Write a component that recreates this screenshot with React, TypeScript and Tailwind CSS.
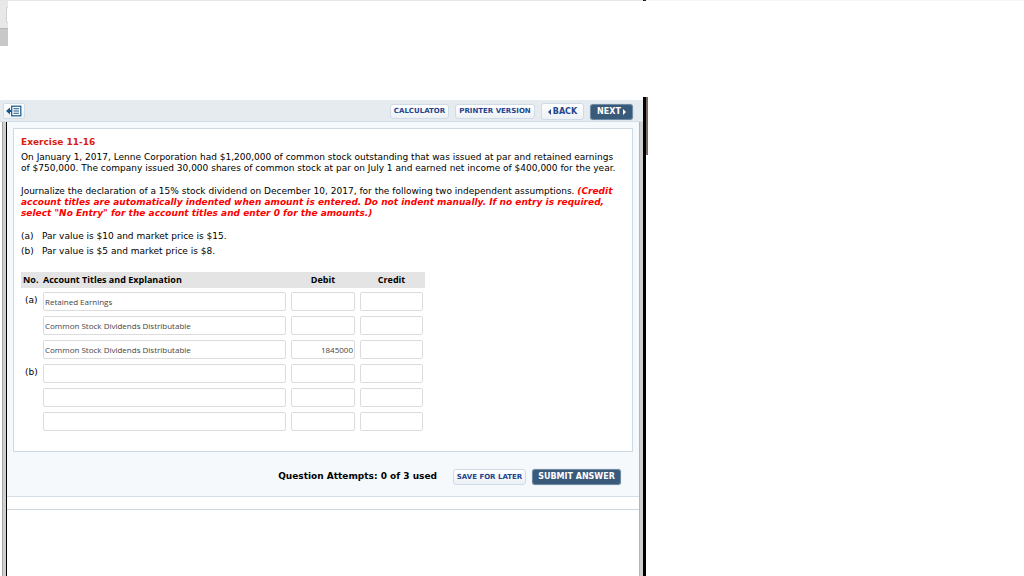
import { useState } from 'react';
import type { ReactNode } from 'react';
import clsx from 'clsx';

interface EntryRow {
  no?: string;
  account: string;
  debit: string;
  credit: string;
}

const INITIAL_ROWS: EntryRow[] = [
  { no: '(a)', account: 'Retained Earnings', debit: '', credit: '' },
  { account: 'Common Stock Dividends Distributable', debit: '', credit: '' },
  { account: 'Common Stock Dividends Distributable', debit: '1845000', credit: '' },
  { no: '(b)', account: '', debit: '', credit: '' },
  { account: '', debit: '', credit: '' },
  { account: '', debit: '', credit: '' },
];

const FIELD =
  "block h-[19px] w-full rounded-xs border border-[#dcdcdc] bg-white px-px font-['Open_Sans',sans-serif] text-[8px] text-[#444] outline-none focus:border-[#8fb1cc]";

function LightButton({
  children,
  className,
}: {
  children: ReactNode;
  className?: string;
}) {
  return (
    <button
      type="button"
      className={clsx(
        'flex items-center justify-center whitespace-nowrap rounded-[3px] border border-[#cfdbe6] bg-linear-to-b from-white to-[#edf1f5] font-bold text-[#24458f]',
        className
      )}
    >
      {children}
    </button>
  );
}

function DarkButton({
  children,
  className,
}: {
  children: ReactNode;
  className?: string;
}) {
  return (
    <button
      type="button"
      className={clsx(
        'flex items-center justify-center whitespace-nowrap rounded-[3px] border border-[#6f8ba3] bg-[#3a5a7a] font-bold text-white shadow-[0_0_1px_#8aa5bb]',
        className
      )}
    >
      {children}
    </button>
  );
}

function CollapseIcon() {
  return (
    <svg width="16" height="12" viewBox="0 0 16 12" aria-hidden="true">
      <path d="M0 6 L4 2.6 V5 H6 V7 H4 V9.4 Z" fill="#14558a" />
      <rect x="5.7" y="1.2" width="9.1" height="9.6" fill="#fff" stroke="#14558a" strokeWidth="1.2" />
      <path d="M7.5 3.7 H13 M7.5 6 H13 M7.5 8.3 H13" stroke="#14558a" strokeWidth="1.1" />
    </svg>
  );
}

function Toolbar() {
  return (
    <div className="flex h-[22px] items-center border-b border-[#d3dee8] bg-[#e6ebf0] pr-2.5 pl-[3px]">
      <button
        type="button"
        aria-label="Toggle menu"
        className="flex h-4 w-[22px] items-center justify-center rounded-xs border border-[#d3dde6] bg-linear-to-b from-white to-[#eff3f6]"
      >
        <CollapseIcon />
      </button>
      <div className="ml-auto flex items-center gap-1.5 pt-0.5">
        <LightButton className="h-[15px] w-[59px] text-[7px]">CALCULATOR</LightButton>
        <LightButton className="h-[15px] w-20 text-[7px]">PRINTER VERSION</LightButton>
        <LightButton className="h-[17px] w-[43px] gap-0.5 text-[8px]">
          <svg width="3" height="6" viewBox="0 0 3 6" aria-hidden="true">
            <path d="M3 0 V6 L0 3 Z" fill="currentColor" />
          </svg>
          BACK
        </LightButton>
        <DarkButton className="h-4 w-[43px] gap-0.5 text-[8px]">
          NEXT
          <svg width="3" height="6" viewBox="0 0 3 6" aria-hidden="true">
            <path d="M0 0 V6 L3 3 Z" fill="currentColor" />
          </svg>
        </DarkButton>
      </div>
    </div>
  );
}

function JournalTable() {
  const [rows, setRows] = useState(INITIAL_ROWS);

  const update = (index: number, key: 'account' | 'debit' | 'credit', value: string) => {
    setRows((prev) => prev.map((row, i) => (i === index ? { ...row, [key]: value } : row)));
  };

  return (
    <table className="mt-[13px] w-[404px] table-fixed border-collapse">
      <colgroup>
        <col className="w-[22px]" />
        <col className="w-[248px]" />
        <col className="w-[69px]" />
        <col className="w-[65px]" />
      </colgroup>
      <thead>
        <tr className="h-4 bg-[#e4e4e4] font-['Open_Sans',sans-serif] text-[9px] leading-4">
          <th className="p-0 pl-0.5 text-left">No.</th>
          <th className="p-0 text-left">Account Titles and Explanation</th>
          <th className="p-0 pr-[5px] text-center">Debit</th>
          <th className="p-0 pr-0.5 text-center">Credit</th>
        </tr>
      </thead>
      <tbody>
        {rows.map((row, i) => (
          <tr key={i} className="h-6">
            <td className="p-0 pl-1 text-[9px] leading-6">{row.no}</td>
            <td className="p-0 pt-0.5 pr-[5px]">
              <input
                className={FIELD}
                aria-label={`Account title ${i + 1}`}
                value={row.account}
                onChange={(e) => update(i, 'account', e.target.value)}
              />
            </td>
            <td className="p-0 pt-0.5 pr-[5px]">
              <input
                className={clsx(FIELD, 'text-right')}
                aria-label={`Debit ${i + 1}`}
                value={row.debit}
                onChange={(e) => update(i, 'debit', e.target.value)}
              />
            </td>
            <td className="p-0 pt-0.5 pr-0.5">
              <input
                className={clsx(FIELD, 'text-right')}
                aria-label={`Credit ${i + 1}`}
                value={row.credit}
                onChange={(e) => update(i, 'credit', e.target.value)}
              />
            </td>
          </tr>
        ))}
      </tbody>
    </table>
  );
}

function Exercise() {
  return (
    <section className="border border-[#cddae4] bg-white pt-2 pr-1 pb-[19px] pl-[7px] text-[9px] leading-[11px] text-black">
      <h1 className="font-bold text-[#d9200c]">Exercise 11-16</h1>
      <p className="mt-1 whitespace-nowrap">
        On January 1, 2017, Lenne Corporation had $1,200,000 of common stock outstanding that was issued at par and retained earnings
        <br />
        of $750,000. The company issued 30,000 shares of common stock at par on July 1 and earned net income of $400,000 for the year.
      </p>
      <p className="mt-3 whitespace-nowrap">
        Journalize the declaration of a 15% stock dividend on December 10, 2017, for the following two independent assumptions.{' '}
        <strong className="italic text-[#f00]">
          (Credit
          <br />
          account titles are automatically indented when amount is entered. Do not indent manually. If no entry is required,
          <br />
          select "No Entry" for the account titles and enter 0 for the amounts.)
        </strong>
      </p>
      <dl className="mt-2.5 grid grid-cols-[21px_1fr] leading-[15px]">
        <dt>(a)</dt>
        <dd>Par value is $10 and market price is $15.</dd>
        <dt>(b)</dt>
        <dd>Par value is $5 and market price is $8.</dd>
      </dl>
      <JournalTable />
    </section>
  );
}

export default function App() {
  return (
    <div className="flex min-h-screen flex-col bg-white font-['Verdana','DejaVu_Sans',sans-serif]">
      <header className="flex h-[97px] flex-col">
        <div className="flex h-px">
          <div className="flex-1 bg-[#e6e6e6]" />
          <div className="w-[3px] bg-[#222]" />
          <div className="w-[378px] bg-[#f5f5f5]" />
        </div>
        <div className="flex h-[27px] w-2 items-center justify-end bg-[#e8e8e8]">
          <div className="h-4 w-0.5 rounded-l-xs border border-r-0 border-[#d2d2d2] bg-white" />
        </div>
        <div className="h-[18px] w-2 border-t border-[#b5b5b5] bg-[#c8c8c8]" />
      </header>

      <div className="flex flex-1">
        <main className="flex min-w-0 flex-1 flex-col pt-[3px]">
          <Toolbar />
          <div className="flex flex-1 pl-0.5">
            <div className="w-[5px] border-r border-l border-r-black border-l-[#a5a5a5] bg-[#cfcfcf]" />
            <div className="min-w-0 flex-1">
              <div className="border-b border-[#d3dfe9] bg-[#f5f9fc] px-1.5 pt-1.5">
                <Exercise />
                <div className="flex h-11 items-center justify-end pt-1.5 pr-3">
                  <p className="mr-4 text-[9px] font-bold">Question Attempts: 0 of 3 used</p>
                  <LightButton className="mr-1.5 h-4 w-[73px] text-[7px]">SAVE FOR LATER</LightButton>
                  <DarkButton className="h-4 w-[89px] text-[8px]">SUBMIT ANSWER</DarkButton>
                </div>
              </div>
              <div className="h-[13px] border-b border-[#cbd6e0]" />
            </div>
            <div className="w-1 border-l border-[#b5b5b5] bg-[#cfcfcf]" />
          </div>
        </main>
        <div className="w-[3px] bg-black" />
        <aside className="w-[378px]">
          <div className="h-[58px] w-0.5 bg-[#7b6760]" />
        </aside>
      </div>
    </div>
  );
}
